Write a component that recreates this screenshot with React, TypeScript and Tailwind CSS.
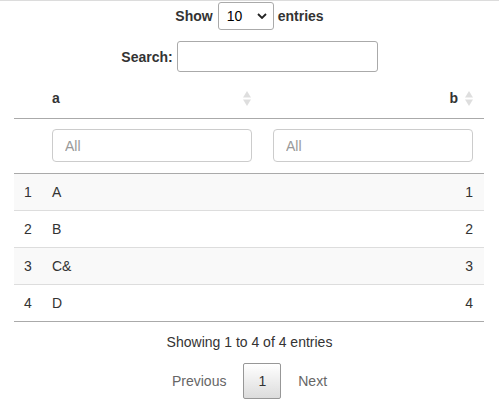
import React from 'react';

const rows = [
  { n: 1, a: 'A', b: 1 },
  { n: 2, a: 'B', b: 2 },
  { n: 3, a: 'C&', b: 3 },
  { n: 4, a: 'D', b: 4 },
];

// faint up/down arrows shown on sortable headers
const SortIcon = () => (
  <svg width="8" height="15" viewBox="0 0 8 15" className="absolute right-[11px] top-[13px]">
    <polygon points="0,6.5 4,0 8,6.5" fill="#000" fillOpacity="0.13" />
    <polygon points="0,8.5 8,8.5 4,15" fill="#000" fillOpacity="0.13" />
  </svg>
);

export default function App() {
  return (
    <div
      className="w-[499px] h-[405px] bg-white text-[#333] text-[14px] leading-[20px] border-t border-[#dcdcdc]"
      style={{ fontFamily: '"Liberation Sans", Arial, sans-serif' }}
    >
      {/* length select */}
      <div className="flex items-center justify-center h-[30px] font-bold">
        <span>Show</span>
        <div className="relative ml-[5px] mr-[4px]">
          <select
            defaultValue="10"
            className="appearance-none w-[56px] h-[28px] pl-[8px] border border-[#aaa] rounded-[3px] bg-white font-normal text-[14px] text-black outline-none"
          >
            <option>10</option>
            <option>25</option>
            <option>50</option>
            <option>100</option>
          </select>
          <svg width="10" height="6" viewBox="0 0 10 6" className="absolute right-[7px] top-[11px] pointer-events-none">
            <path d="M1 1 L5 5 L9 1" fill="none" stroke="#222" strokeWidth="1.8" />
          </svg>
        </div>
        <span>entries</span>
      </div>

      {/* search */}
      <div className="flex items-center justify-center mt-[10px] font-bold">
        <label>Search:</label>
        <input
          type="search"
          className="ml-[4px] w-[201px] h-[31px] border border-[#aaa] rounded-[3px] px-[6px] outline-none"
        />
      </div>

      {/* table */}
      <table className="mt-[6px] ml-[14px] w-[470px] border-collapse table-fixed">
        <colgroup>
          <col className="w-[28px]" />
          <col className="w-[220px]" />
          <col className="w-[222px]" />
        </colgroup>
        <thead>
          <tr className="border-b border-[#aaa]">
            <th className="h-[40px]"></th>
            <th className="relative text-left font-bold pl-[10px] pr-[26px] py-[10px]">
              a
              <SortIcon />
            </th>
            <th className="relative text-right font-bold pl-[10px] pr-[26px] py-[10px]">
              b
              <SortIcon />
            </th>
          </tr>
          <tr className="border-b border-[#aaa]">
            <td></td>
            <td className="pt-[10px] pb-[11px] pl-[10px] pr-[10px]">
              <input
                placeholder="All"
                className="w-full h-[33px] border border-[#ccc] rounded-[4px] px-[12px] text-[14px] placeholder:text-[#999] outline-none"
              />
            </td>
            <td className="pt-[10px] pb-[11px] pl-[11px] pr-[11px]">
              <input
                placeholder="All"
                className="w-full h-[33px] border border-[#ccc] rounded-[4px] px-[12px] text-[14px] placeholder:text-[#999] outline-none"
              />
            </td>
          </tr>
        </thead>
        <tbody>
          {rows.map((r, i) => (
            <tr
              key={r.n}
              className={`${i % 2 === 0 ? 'bg-[#f9f9f9]' : 'bg-white'} ${
                i === rows.length - 1 ? 'border-b border-[#aaa]' : 'border-b border-[#ddd]'
              }`}
            >
              <td className="pl-[10px] py-[8px]">{r.n}</td>
              <td className="px-[10px] py-[8px]">{r.a}</td>
              <td className="pl-[10px] pr-[11px] py-[8px] text-right">{r.b}</td>
            </tr>
          ))}
        </tbody>
      </table>

      {/* info */}
      <div className="pt-[10px] text-center">Showing 1 to 4 of 4 entries</div>

      {/* pagination */}
      <div className="mt-[11px] flex justify-center items-center">
        <span className="px-[14px] py-[7px] border border-transparent text-[#666]">Previous</span>
        <span className="ml-[2px] px-[14px] py-[7px] border border-[#979797] rounded-[2px] bg-gradient-to-b from-white to-[#dcdcdc] text-[#333]">
          1
        </span>
        <span className="ml-[2px] px-[14px] py-[7px] border border-transparent text-[#666]">Next</span>
      </div>
    </div>
  );
}
